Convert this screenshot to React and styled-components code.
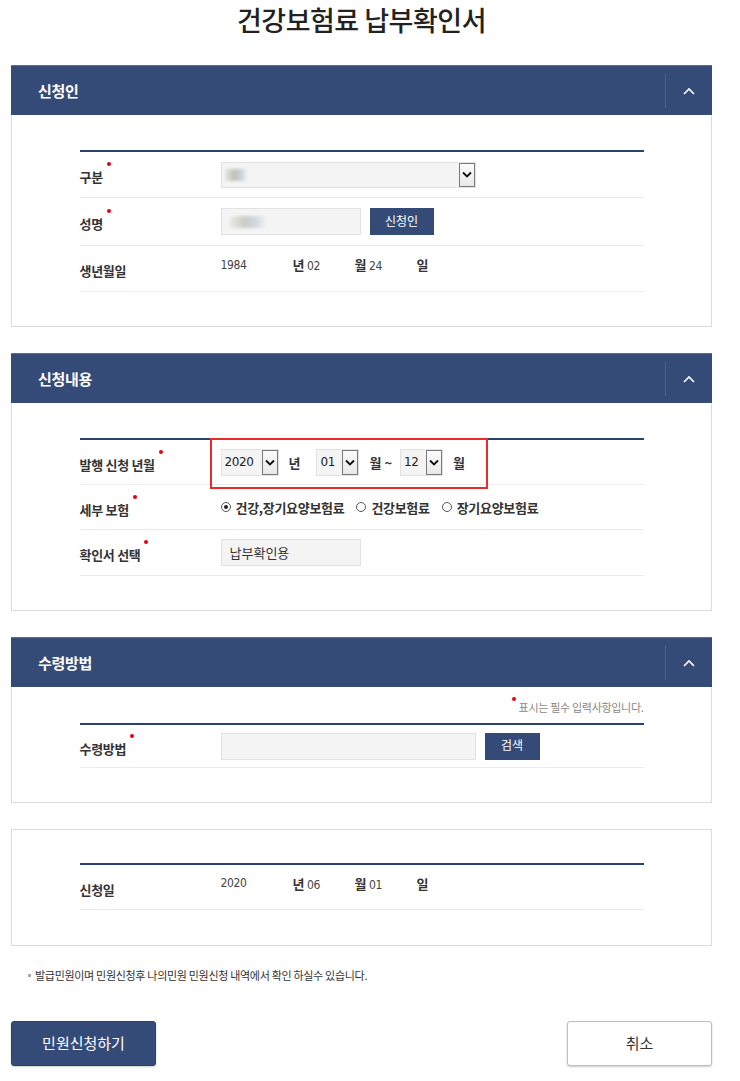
import React from "react";
import styled, { createGlobalStyle } from "styled-components";

const NAVY = "#344b78";

const Global = createGlobalStyle`
  html, body { margin: 0; padding: 0; background: #fff; }
  body {
    font-family: "Noto Sans CJK KR", "Noto Sans", sans-serif;
    color: #333;
  }
  * { box-sizing: border-box; }
`;

/* ---------------- layout ---------------- */

const Page = styled.div`
  width: 701px;
  margin-left: 11px;
  padding-bottom: 14px;
`;

const Title = styled.h1`
  margin: 0 0 25px;
  height: 40px;
  line-height: 40px;
  text-align: center;
  font-size: 27px;
  font-weight: 500;
  color: #222;
  letter-spacing: -0.5px;
`;

const Section = styled.section`
  margin-bottom: ${({ $mb }) => $mb || 26}px;
`;

const Header = styled.div`
  height: 50px;
  background: ${NAVY};
  display: flex;
  align-items: center;
  border-top: 1px solid #5a6f97;
`;

const HeaderTitle = styled.h2`
  flex: 1;
  margin: 0;
  padding-left: 27px;
  font-size: 15px;
  font-weight: 700;
  color: #fff;
  letter-spacing: -0.3px;
`;

const Toggle = styled.button`
  width: 47px;
  height: 34px;
  border: 0;
  border-left: 1px solid rgba(255, 255, 255, 0.14);
  background: transparent;
  display: flex;
  align-items: center;
  justify-content: center;
  padding: 0;
  cursor: pointer;
`;

const Body = styled.div`
  border: 1px solid #dcdcdc;
  border-top: ${({ $bordered }) => ($bordered ? "1px solid #dcdcdc" : "0")};
  padding: ${({ $top }) => $top}px 0 ${({ $bottom }) => $bottom || 34}px;
`;

const Notice = styled.div`
  width: 564px;
  margin: 0 auto 8px;
  text-align: right;
  font-size: 11px;
  color: #888;
  letter-spacing: -0.3px;
`;

const Table = styled.div`
  width: 564px;
  margin: 0 auto;
  border-top: 2px solid #2b4170;
`;

const Row = styled.div`
  position: relative;
  display: grid;
  grid-template-columns: 141px 1fr;
  align-items: center;
  height: ${({ $h }) => $h || 46}px;
  border-bottom: 1px solid #ebebeb;
`;

const Label = styled.div`
  font-size: 13px;
  font-weight: 700;
  color: #333;
  letter-spacing: -0.3px;
  padding-top: 4px;
`;

const Dot = styled.span`
  display: inline-block;
  width: 4px;
  height: 4px;
  border-radius: 50%;
  background: #e60012;
  vertical-align: top;
  margin-left: ${({ $ml }) => ($ml === undefined ? 4 : $ml)}px;
  margin-right: ${({ $mr }) => $mr || 0}px;
  position: relative;
  top: ${({ $top }) => ($top === undefined ? -5 : $top)}px;
`;

const Cell = styled.div`
  display: flex;
  align-items: center;
`;

/* ---------------- controls ---------------- */

const SelectBox = styled.div`
  width: ${({ $w }) => $w}px;
  height: ${({ $h }) => $h || 27}px;
  display: flex;
  align-items: stretch;
  background: #f4f4f4;
  border: 1px solid #e2e2e2;
`;

const SelectValue = styled.div`
  flex: 1;
  display: flex;
  align-items: center;
  padding-left: 3px;
  font-size: 12px;
  color: #222;
  font-family: "DejaVu Sans", "Noto Sans", sans-serif;
  letter-spacing: -0.4px;
`;

const ArrowBox = styled.div`
  width: 16px;
  border: 1px solid #7a7a7a;
  background: linear-gradient(#fbfbfb, #e9e9e9);
  display: flex;
  align-items: center;
  justify-content: center;
`;

const Input = styled.div`
  width: ${({ $w }) => $w}px;
  height: 27px;
  background: #f4f4f4;
  border: 1px solid #e2e2e2;
  display: flex;
  align-items: center;
  padding-left: 8px;
  font-size: 13px;
  color: #333;
`;

const Blur = styled.span`
  display: inline-block;
  width: ${({ $w }) => $w}px;
  height: 12px;
  background: linear-gradient(90deg, #e5e6e2 0%, #b9bcb1 40%, #c2cbd6 70%, #eef1f4 100%);
  filter: blur(1.5px);
  opacity: ${({ $o }) => $o || 0.9};
`;

const NavyButton = styled.button`
  width: ${({ $w }) => $w}px;
  height: 27px;
  margin-left: ${({ $ml }) => $ml}px;
  border: 0;
  background: ${NAVY};
  color: #fff;
  font-family: inherit;
  font-size: 12px;
  padding: 0 0 3px;
  cursor: pointer;
`;

const Unit = styled.span`
  font-size: 13px;
  font-weight: 700;
  color: #333;
  margin: 0 ${({ $mr }) => $mr || 0}px 0 ${({ $ml }) => $ml || 0}px;
`;

const Highlight = styled.div`
  position: absolute;
  left: 130px;
  top: -2px;
  width: 278px;
  height: 51px;
  border: 2px solid #ec2a2a;
  pointer-events: none;
`;

const RadioGroup = styled.div`
  display: flex;
  align-items: center;
`;

const RadioItem = styled.label`
  display: flex;
  align-items: center;
  gap: 5px;
  margin-right: 12px;
  font-size: 13px;
  font-weight: 700;
  color: #333;
  letter-spacing: -0.3px;
`;

const RadioCircle = styled.span`
  width: 10px;
  height: 10px;
  border-radius: 50%;
  border: 1px solid #555;
  background: #fff;
  display: flex;
  align-items: center;
  justify-content: center;

  &::after {
    content: "";
    width: 4px;
    height: 4px;
    border-radius: 50%;
    background: ${({ $on }) => ($on ? "#222" : "transparent")};
  }
`;

const DateText = styled.div`
  display: flex;
  align-items: center;
  padding-bottom: 8px;
`;

const DatePart = styled.span`
  width: ${({ $w }) => $w}px;
  font-size: 12px;
  color: #444;
  font-family: "Liberation Sans Narrow", "DejaVu Sans Condensed", "Noto Sans", sans-serif;
  letter-spacing: -0.4px;
  b {
    font-family: "Noto Sans CJK KR", sans-serif;
    font-weight: 700;
    color: #333;
    font-size: 13px;
    margin-right: 3px;
  }
`;

const FootNote = styled.p`
  margin: 0 0 0 17px;
  font-size: 11px;
  color: #333;
  letter-spacing: -0.3px;
  display: flex;
  align-items: center;
  gap: 4px;

  &::before {
    content: "";
    width: 3px;
    height: 3px;
    background: #aaa;
  }
`;

const Actions = styled.div`
  display: flex;
  justify-content: space-between;
  margin-top: 38px;
`;

const BigButton = styled.button`
  width: 145px;
  height: 45px;
  border-radius: 3px;
  font-family: inherit;
  font-size: 15px;
  cursor: pointer;
  padding-bottom: 3px;
  background: ${({ $primary }) => ($primary ? NAVY : "#fff")};
  color: ${({ $primary }) => ($primary ? "#fff" : "#333")};
  border: 1px solid ${({ $primary }) => ($primary ? "#2c4068" : "#bdbdbd")};
  box-shadow: 0 1px 2px rgba(0, 0, 0, 0.2);
`;

/* ---------------- icons ---------------- */

const ChevronUp = () => (
  <svg width="12" height="8" viewBox="0 0 12 8">
    <path d="M1 7 L6 2 L11 7" fill="none" stroke="#fff" strokeWidth="1.6" />
  </svg>
);

const ChevronDown = () => (
  <svg width="10" height="7" viewBox="0 0 10 7">
    <path d="M1 1.5 L5 5.5 L9 1.5" fill="none" stroke="#111" strokeWidth="1.8" />
  </svg>
);

const Select = ({ w, h, children }) => (
  <SelectBox $w={w} $h={h}>
    <SelectValue>{children}</SelectValue>
    <ArrowBox>
      <ChevronDown />
    </ArrowBox>
  </SelectBox>
);

const Panel = ({ title, children }) => (
  <Section>
    <Header>
      <HeaderTitle>{title}</HeaderTitle>
      <Toggle aria-label="접기">
        <ChevronUp />
      </Toggle>
    </Header>
    {children}
  </Section>
);

const DateLine = ({ y, m, d }) => (
  <DateText>
    <DatePart $w={72}>{y}</DatePart>
    <DatePart $w={62}>
      <b>년</b>
      {m}
    </DatePart>
    <DatePart $w={62}>
      <b>월</b>
      {d}
    </DatePart>
    <DatePart $w={20}>
      <b>일</b>
    </DatePart>
  </DateText>
);

/* ---------------- page ---------------- */

export default function App() {
  return (
    <>
      <Global />
      <Page>
        <Title>건강보험료 납부확인서</Title>

        <Panel title="신청인">
          <Body $top={35}>
            <Table>
              <Row>
                <Label>
                  구분<Dot />
                </Label>
                <Cell>
                  <Select w={255} h={26}>
                    <Blur $w={22} />
                  </Select>
                </Cell>
              </Row>
              <Row $h={48}>
                <Label>
                  성명<Dot />
                </Label>
                <Cell>
                  <Input $w={140}>
                    <Blur $w={36} $o={0.7} />
                  </Input>
                  <NavyButton $w={64} $ml={9}>
                    신청인
                  </NavyButton>
                </Cell>
              </Row>
              <Row>
                <Label>생년월일</Label>
                <DateLine y="1984" m="02" d="24" />
              </Row>
            </Table>
          </Body>
        </Panel>

        <Panel title="신청내용">
          <Body $top={35}>
            <Table>
              <Row $h={45}>
                <Label>
                  발행 신청 년월<Dot />
                </Label>
                <Cell>
                  <Select w={58}>2020</Select>
                  <Unit $ml={10} $mr={16}>
                    년
                  </Unit>
                  <Select w={43}>01</Select>
                  <Unit $ml={10} $mr={8}>
                    월 ~
                  </Unit>
                  <Select w={43}>12</Select>
                  <Unit $ml={10}>월</Unit>
                </Cell>
                <Highlight />
              </Row>
              <Row $h={45}>
                <Label>
                  세부 보험<Dot />
                </Label>
                <RadioGroup>
                  <RadioItem>
                    <RadioCircle $on />
                    건강,장기요양보험료
                  </RadioItem>
                  <RadioItem>
                    <RadioCircle />
                    건강보험료
                  </RadioItem>
                  <RadioItem>
                    <RadioCircle />
                    장기요양보험료
                  </RadioItem>
                </RadioGroup>
              </Row>
              <Row>
                <Label>
                  확인서 선택<Dot />
                </Label>
                <Cell>
                  <Input $w={140}>납부확인용</Input>
                </Cell>
              </Row>
            </Table>
          </Body>
        </Panel>

        <Panel title="수령방법">
          <Body $top={12}>
            <Notice>
              <Dot $ml={0} $mr={3} $top={-2} />
              표시는 필수 입력사항입니다.
            </Notice>
            <Table>
              <Row $h={43}>
                <Label>
                  수령방법<Dot />
                </Label>
                <Cell>
                  <Input $w={255} />
                  <NavyButton $w={55} $ml={9}>
                    검색
                  </NavyButton>
                </Cell>
              </Row>
            </Table>
          </Body>
        </Panel>

        <Section $mb={21}>
          <Body $bordered $top={33} $bottom={35}>
            <Table>
              <Row $h={45}>
                <Label>신청일</Label>
                <DateLine y="2020" m="06" d="01" />
              </Row>
            </Table>
          </Body>
        </Section>

        <FootNote>발급민원이며 민원신청후 나의민원 민원신청 내역에서 확인 하실수 있습니다.</FootNote>

        <Actions>
          <BigButton $primary>민원신청하기</BigButton>
          <BigButton>취소</BigButton>
        </Actions>
      </Page>
    </>
  );
}
